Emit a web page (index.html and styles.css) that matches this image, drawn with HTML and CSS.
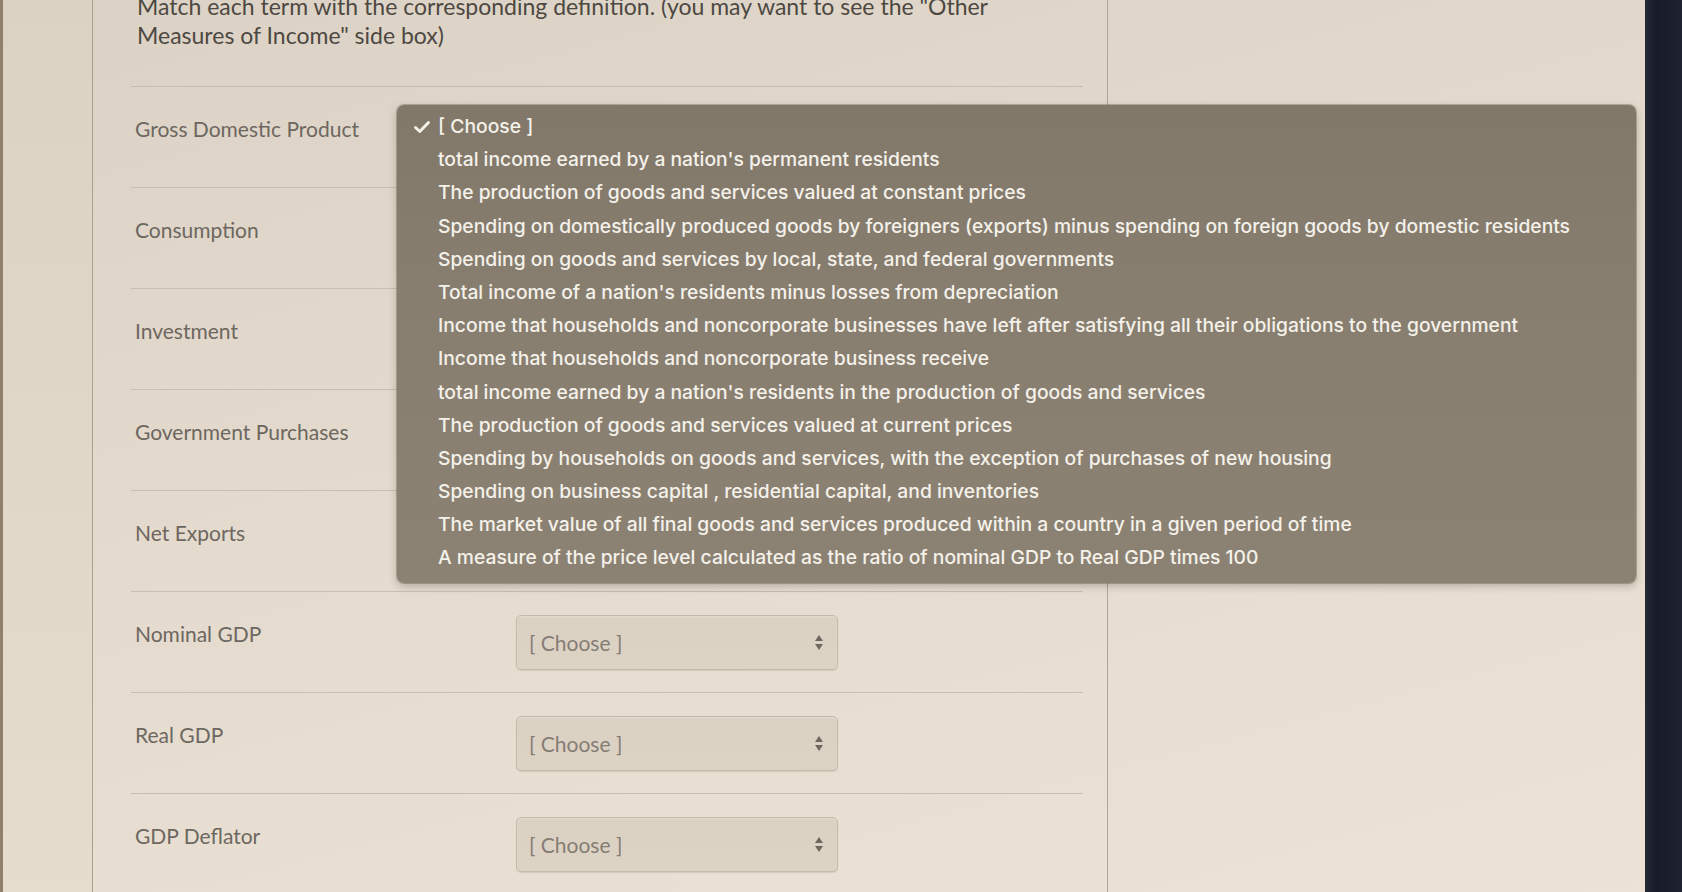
FILE: index.html
```html
<!DOCTYPE html>
<html lang="en">
<head>
<meta charset="utf-8">
<title>Matching question</title>
<link rel="stylesheet" href="styles.css">
</head>
<body>
<div class="screen">
  <div class="gutter"></div>
  <main class="question">
    <div class="prompt">
      <p>Match each term with the corresponding definition. (you may want to see the "Other<br>Measures of Income" side box)</p>
    </div>
    <div class="answers">
      <div class="row"><span class="term">Gross Domestic Product</span><div class="select covered"><span>[ Choose ]</span><i class="arrows"></i></div></div>
      <div class="row"><span class="term">Consumption</span><div class="select covered"><span>[ Choose ]</span><i class="arrows"></i></div></div>
      <div class="row"><span class="term">Investment</span><div class="select covered"><span>[ Choose ]</span><i class="arrows"></i></div></div>
      <div class="row"><span class="term">Government Purchases</span><div class="select covered"><span>[ Choose ]</span><i class="arrows"></i></div></div>
      <div class="row"><span class="term">Net Exports</span><div class="select covered"><span>[ Choose ]</span><i class="arrows"></i></div></div>
      <div class="row"><span class="term">Nominal GDP</span><div class="select"><span>[ Choose ]</span><i class="arrows"></i></div></div>
      <div class="row"><span class="term">Real GDP</span><div class="select"><span>[ Choose ]</span><i class="arrows"></i></div></div>
      <div class="row last"><span class="term">GDP Deflator</span><div class="select"><span>[ Choose ]</span><i class="arrows"></i></div></div>
    </div>
  </main>
  <aside class="side"></aside>
  <div class="bezel"></div>

  <ul class="menu">
    <li class="checked"><svg class="tick" width="18" height="14" viewBox="0 0 18 14"><path d="M2.5 7.5 L6.8 11.5 L15.5 2.5" fill="none" stroke="#f4f1ea" stroke-width="3" stroke-linecap="round" stroke-linejoin="round"/></svg>[ Choose ]</li>
    <li>total income earned by a nation's permanent residents</li>
    <li>The production of goods and services valued at constant prices</li>
    <li>Spending on domestically produced goods by foreigners (exports) minus spending on foreign goods by domestic residents</li>
    <li>Spending on goods and services by local, state, and federal governments</li>
    <li>Total income of a nation's residents minus losses from depreciation</li>
    <li>Income that households and noncorporate businesses have left after satisfying all their obligations to the government</li>
    <li>Income that households and noncorporate business receive</li>
    <li>total income earned by a nation's residents in the production of goods and services</li>
    <li>The production of goods and services valued at current prices</li>
    <li>Spending by households on goods and services, with the exception of purchases of new housing</li>
    <li>Spending on business capital , residential capital, and inventories</li>
    <li>The market value of all final goods and services produced within a country in a given period of time</li>
    <li>A measure of the price level calculated as the ratio of nominal GDP to Real GDP times 100</li>
  </ul>
</div>
</body>
</html>
```

FILE: styles.css
```css
* { box-sizing: border-box; }

html, body {
  margin: 0;
  padding: 0;
  width: 1682px;
  height: 892px;
  overflow: hidden;
}

body {
  background: #e0d7ca;
  font-family: Lato, "Liberation Sans", sans-serif;
}

.screen {
  position: relative;
  display: flex;
  width: 1682px;
  height: 892px;
  background: linear-gradient(165deg, #dbd2c5 0%, #e4dbce 45%, #ece3d6 100%);
}

.gutter {
  width: 93px;
  flex: none;
  border-left: 3px solid #8f806b;
  border-right: 1px solid #a99f92;
  background: linear-gradient(180deg, #dcd2c4, #e6dccd);
}

.question {
  width: 1015px;
  flex: none;
  border-right: 1px solid #afa69a;
  padding: 0 24px 0 38px;
}

.prompt {
  margin-top: -8px;
  padding: 0 0 36px 6px;
  border-bottom: 1px solid #c5bcb0;
}

.prompt p {
  margin: 0;
  font-size: 23px;
  line-height: 29px;
  color: #4d4842;
}

.row {
  display: flex;
  align-items: flex-start;
  height: 101px;
  padding-top: 23px;
  border-bottom: 1px solid #c8bfb3;
}

.row.last { border-bottom: none; }

.term {
  width: 385px;
  flex: none;
  padding: 6px 0 0 4px;
  font-size: 21px;
  color: #6d6760;
}

.select {
  width: 322px;
  height: 55px;
  display: flex;
  align-items: center;
  justify-content: space-between;
  padding: 0 14px 0 12px;
  background: linear-gradient(180deg, #dbd1c3, #ddd3c5);
  border: 1px solid #c4baac;
  border-radius: 5px;
  box-shadow: 0 1px 1px rgba(120, 105, 90, 0.18), inset 0 1px 2px rgba(255, 255, 255, 0.25);
  font-size: 21px;
  color: #857d74;
}

/* selects that sit underneath the open popup list */
.select.covered {
  visibility: hidden;
}

.arrows {
  position: relative;
  width: 8px;
  height: 17px;
}

.arrows::before,
.arrows::after {
  content: "";
  position: absolute;
  left: 0;
  border-left: 4px solid transparent;
  border-right: 4px solid transparent;
}

.arrows::before { top: 1px; border-bottom: 6px solid #6f685f; }
.arrows::after { bottom: 1px; border-top: 6px solid #6f685f; }

.side {
  flex: 1;
}

.bezel {
  width: 37px;
  flex: none;
  background: linear-gradient(90deg, #262a36, #181c28 30%, #1e2230);
}

/* native popup list opened over the first select */
.menu {
  position: absolute;
  left: 397px;
  top: 105px;
  width: 1239px;
  margin: 0;
  padding: 5px 0 8px;
  list-style: none;
  background: linear-gradient(180deg, #81786a 0%, #887e6f 40%, #8c8273 100%);
  border-radius: 7px;
  box-shadow: 0 3px 8px rgba(60, 50, 40, 0.3), 0 0 0 1px rgba(100, 90, 78, 0.35);
  font-family: Inter, "Liberation Sans", sans-serif;
  font-size: 19.3px;
  font-weight: 500;
  color: #f4f1ea;
}

.menu li {
  height: 33.2px;
  line-height: 33.2px;
  padding-left: 41px;
  white-space: nowrap;
}

.menu li.checked {
  position: relative;
}

.tick {
  position: absolute;
  left: 16px;
  top: 10px;
}
```
